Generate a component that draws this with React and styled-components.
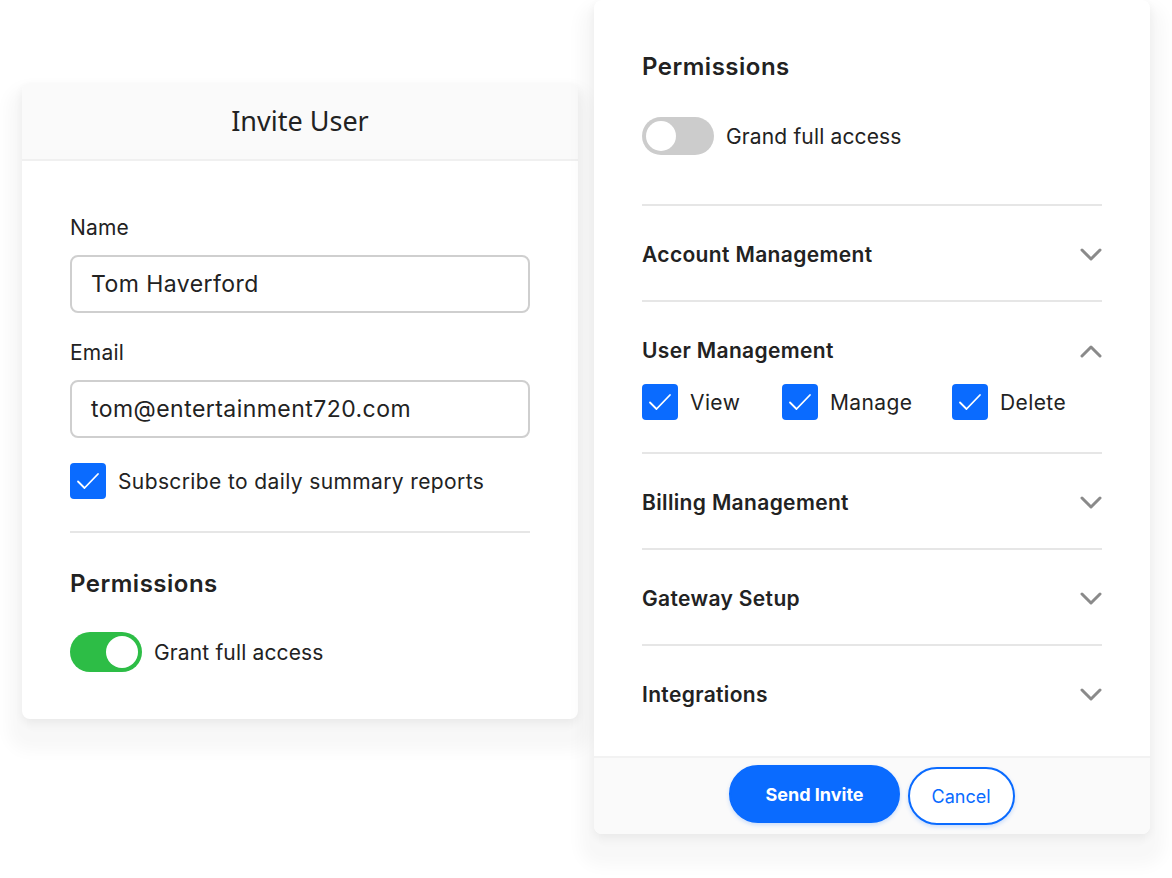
import React from "react";
import styled, { createGlobalStyle } from "styled-components";

const Global = createGlobalStyle`
  html, body { margin: 0; padding: 0; background: #ffffff; }
  body { font-family: Inter, "Noto Sans", Arial, sans-serif; color: #222; }
  * { box-sizing: border-box; }
`;

const Canvas = styled.div`
  display: flex;
  align-items: flex-start;
  gap: 16px;
  padding-left: 22px;
  width: 1172px;
  height: 878px;
  overflow: hidden;
`;

const Card = styled.div`
  width: 556px;
  margin-top: ${(p) => p.$top}px;
  background: #fff;
  border-radius: 8px;
  box-shadow: 0 4px 10px rgba(0, 0, 0, 0.06), 0 18px 16px 14px rgba(0, 0, 0, 0.03);
  overflow: hidden;
  display: flex;
  flex-direction: column;
`;

const Header = styled.div`
  height: 78px;
  background: #fafafa;
  border-bottom: 2px solid #f0f0f0;
  display: flex;
  align-items: center;
  justify-content: center;
  font-family: "Noto Sans", "Open Sans", sans-serif;
  font-size: 27px;
  color: #222;
  padding-bottom: 2px;
`;

const Body = styled.div`
  display: flex;
  flex-direction: column;
  padding: ${(p) => p.$pad};
`;

const Label = styled.div`
  font-size: 21px;
  line-height: 24px;
  letter-spacing: 0.2px;
  margin-top: ${(p) => p.$mt || 0}px;
`;

const Input = styled.div`
  height: 58px;
  margin-top: 15px;
  border: 2px solid #cfcfcf;
  border-radius: 8px;
  display: flex;
  align-items: center;
  padding-left: 19px;
  font-size: 23px;
  letter-spacing: 0.45px;
  color: #222;
`;

const CheckRow = styled.div`
  display: flex;
  align-items: center;
  gap: 12px;
  margin-top: ${(p) => p.$mt || 0}px;
  font-size: 21px;
  letter-spacing: 0.38px;
`;

const Box = styled.div`
  width: 36px;
  height: 36px;
  border-radius: 4px;
  background: #0a6bff;
  display: flex;
  align-items: center;
  justify-content: center;
  flex-shrink: 0;
`;

const Divider = styled.div`
  height: 2px;
  background: #e6e6e6;
  margin-top: ${(p) => p.$mt || 0}px;
`;

const Heading = styled.div`
  font-size: 24px;
  line-height: 30px;
  font-weight: 600;
  letter-spacing: 0.5px;
  color: #222;
  margin-top: ${(p) => p.$mt || 0}px;
`;

const ToggleRow = styled.div`
  display: flex;
  align-items: center;
  gap: 12px;
  margin-top: ${(p) => p.$mt || 0}px;
  font-size: 21px;
  letter-spacing: 0.15px;
`;

const Track = styled.div`
  width: 72px;
  height: ${(p) => p.$h}px;
  border-radius: 20px;
  background: ${(p) => (p.$on ? "#2dbd46" : "#cccccc")};
  padding: 4px;
  display: flex;
  justify-content: ${(p) => (p.$on ? "flex-end" : "flex-start")};
  flex-shrink: 0;
`;

const Knob = styled.div`
  height: 100%;
  aspect-ratio: 1;
  border-radius: 50%;
  background: #fff;
`;

const Section = styled.div`
  border-top: ${(p) => (p.$first ? "none" : "2px solid #e6e6e6")};
  padding: 36px 0 ${(p) => p.$pb || 32}px;
`;

const SectionHead = styled.div`
  display: flex;
  align-items: center;
  justify-content: space-between;
  font-size: 21px;
  line-height: 26px;
  font-weight: 600;
  letter-spacing: 0.35px;
  color: #222;
`;

const Options = styled.div`
  display: flex;
  margin-top: 20px;
`;

const Option = styled.div`
  display: flex;
  align-items: center;
  gap: 12px;
  width: ${(p) => p.$w}px;
  font-size: 21px;
  letter-spacing: 0.4px;
`;

const Footer = styled.div`
  background: #fafafa;
  border-top: 2px solid #f2f2f2;
  height: 78px;
  display: flex;
  align-items: center;
  justify-content: center;
  gap: 8px;
`;

const Button = styled.button`
  height: 58px;
  border-radius: 29px;
  font-family: Inter, sans-serif;
  font-size: 18px;
  padding: 0 ${(p) => (p.$primary ? 34 : 22)}px;
  background: ${(p) => (p.$primary ? "#0a6bff" : "#ffffff")};
  color: ${(p) => (p.$primary ? "#ffffff" : "#0a6bff")};
  border: 2px solid #0a6bff;
  font-weight: ${(p) => (p.$primary ? 700 : 400)};
  box-shadow: 0 2px 4px rgba(10, 107, 255, 0.2);
  margin-top: ${(p) => (p.$primary ? -4 : 0)}px;
  cursor: pointer;
`;

const Check = () => (
  <svg width="36" height="36" viewBox="0 0 36 36">
    <polyline points="8,18.5 14.5,25 28,11" fill="none" stroke="#fff" strokeWidth="1.8" strokeLinecap="round" strokeLinejoin="round" />
  </svg>
);

const Chevron = ({ up }) => (
  <svg width="22" height="14" viewBox="0 0 22 14">
    <polyline
      points={up ? "2,12 11,3 20,12" : "2,2 11,11 20,2"}
      fill="none"
      stroke="#8a8a8a"
      strokeWidth="3"
      strokeLinecap="round"
      strokeLinejoin="round"
    />
  </svg>
);

const sections = [
  { name: "Account Management" },
  { name: "User Management", open: true },
  { name: "Billing Management" },
  { name: "Gateway Setup" },
  { name: "Integrations" },
];

export default function App() {
  return (
    <>
      <Global />
      <Canvas>
        <Card $top={83}>
          <Header>Invite User</Header>
          <Body $pad="55px 48px 47px">
            <Label>Name</Label>
            <Input>Tom Haverford</Input>
            <Label $mt={28}>Email</Label>
            <Input>tom@entertainment720.com</Input>
            <CheckRow $mt={25}>
              <Box><Check /></Box>
              Subscribe to daily summary reports
            </CheckRow>
            <Divider $mt={32} />
            <Heading $mt={36}>Permissions</Heading>
            <ToggleRow $mt={33}>
              <Track $on $h={40}><Knob /></Track>
              Grant full access
            </ToggleRow>
          </Body>
        </Card>
        <Card $top={0}>
          <Body $pad="52px 48px 16px">
            <Heading>Permissions</Heading>
            <ToggleRow $mt={35}>
              <Track $h={38}><Knob /></Track>
              Grand full access
            </ToggleRow>
            <Divider $mt={49} />
            {sections.map((s, i) => (
              <Section key={s.name} $first={i === 0} $pb={s.open ? 32 : 32}>
                <SectionHead>
                  {s.name}
                  <Chevron up={s.open} />
                </SectionHead>
                {s.open && (
                  <Options>
                    <Option $w={140}><Box><Check /></Box>View</Option>
                    <Option $w={170}><Box><Check /></Box>Manage</Option>
                    <Option $w={150}><Box><Check /></Box>Delete</Option>
                  </Options>
                )}
              </Section>
            ))}
          </Body>
          <Footer>
            <Button $primary>Send Invite</Button>
            <Button>Cancel</Button>
          </Footer>
        </Card>
      </Canvas>
    </>
  );
}
